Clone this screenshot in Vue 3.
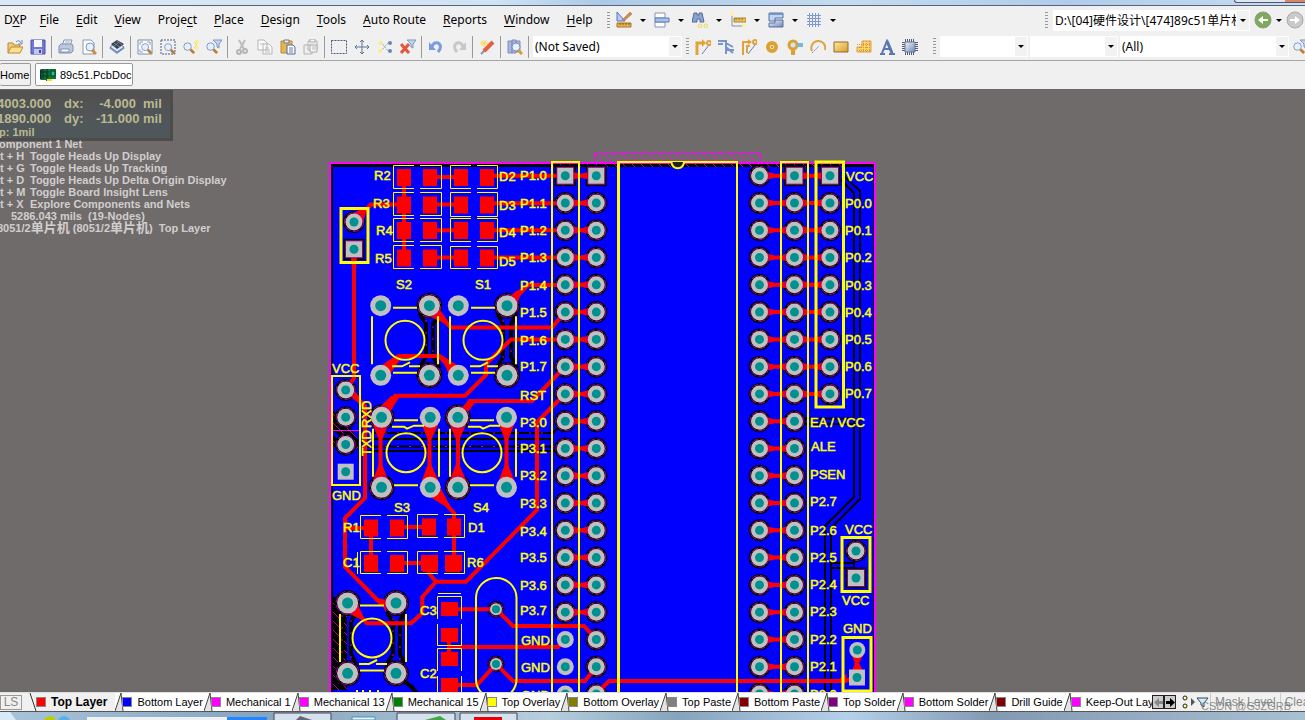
<script setup>
const menus = [
  ['D', 'X', 'P'], ['', 'F', 'ile'], ['', 'E', 'dit'], ['', 'V', 'iew'], ['Proje', 'c', 't'], ['', 'P', 'lace'],
  ['', 'D', 'esign'], ['', 'T', 'ools'], ['', 'A', 'uto Route'], ['', 'R', 'eports'], ['', 'W', 'indow'], ['', 'H', 'elp']
]
const utilities = ['ruler', 'align', 'binoc', 'dimension', 'room', 'grid']
const groups = [
  ['open', 'save'], ['print', 'preview'], ['layers'], ['fit', 'area', 'zoomsel', 'zoomfilter'],
  ['cut', 'copy', 'paste', 'stamp'], ['select', 'move', 'deselect', 'clear'], ['undo', 'redo'], ['wand'], ['browse']
]
const placing = ['route', 'diff', 'multi', 'pad', 'via', 'arc', 'fill', 'poly', 'string', 'chip']

const layers = [
  ['Top Layer', '#ff0000'], ['Bottom Layer', '#0000ff'], ['Mechanical 1', '#ff00ff'], ['Mechanical 13', '#ff00ff'],
  ['Mechanical 15', '#008000'], ['Top Overlay', '#ffff00'], ['Bottom Overlay', '#808000'], ['Top Paste', '#808080'],
  ['Bottom Paste', '#800000'], ['Top Solder', '#800080'], ['Bottom Solder', '#ff00ff'], ['Drill Guide', '#800000'],
  ['Keep-Out Layer', '#ff00ff']
]

const hints = [
  ['t + H', 'Toggle Heads Up Display'], ['t + G', 'Toggle Heads Up Tracking'], ['t + D', 'Toggle Heads Up Delta Origin Display'],
  ['t + M', 'Toggle Board Insight Lens'], ['t + X', 'Explore Components and Nets']
]

const rowY = i => 175.7 + 27.28 * i
const rows = Array.from({ length: 20 }, (_, i) => i)
const pads = []
for (const i of rows) {
  const y = rowY(i)
  pads.push({ x: 565.3, y, r: 8.5, ring: i < 17, sq: i === 0 })
  pads.push({ x: 596.3, y, r: 8.5, ring: true, sq: i === 0 })
  pads.push({ x: 759.5, y, r: 8.5, ring: true })
  pads.push({ x: 794.5, y, r: 8.5, ring: true, sq: i === 0 })
  if (i < 9) pads.push({ x: 830, y, r: 8.5, ring: true, sq: i === 0 })
}
const add = (x, y, r, ring, sq) => pads.push({ x, y, r, ring, sq })
add(354, 222, 8.5, true); add(354, 249.3, 8.5, true, true)
add(345.7, 390, 8.5, true); add(345.7, 417.2, 8.5, true); add(345.7, 444.5, 8.5, true); add(345.7, 471.7, 8, false, true)
add(856, 551, 8.5, true); add(856, 578, 8.5, true, true)
add(857.3, 650, 8, false); add(857, 677.5, 8, false, true)
add(496, 609.3, 6, true); add(496, 664, 6, true)
for (const x of [380.7, 458.3]) for (const y of [305.7, 375.3]) { add(x, y, 10.5, false); add(x + 48.7, y, 10.5, true) }
for (const x of [381.5, 457.8]) for (const y of [417.3, 487.3]) { add(x, y, 10.5, true); add(x + 48.7, y, 10.5, false) }
for (const x of [347.6, 396]) for (const y of [603, 673.3]) add(x, y, 10.5, true)

const link = (x1, x2, y) =>
  `M${x1} ${y - 5}L${x1 + 11} ${y - 3}L${x1 + 15} ${y - 2}H${x2 - 15}L${x2 - 11} ${y - 3}L${x2} ${y - 5}V${y + 5}L${x2 - 11} ${y + 3}L${x2 - 15} ${y + 2}H${x1 + 15}L${x1 + 11} ${y + 3}L${x1} ${y + 5}Z`
const links = []
for (const i of rows) {
  if (i < 17) links.push(link(565.3, 596.3, rowY(i)))
  links.push(link(759.5, 794.5, rowY(i)))
  if (i < 9) links.push(link(794.5, 830, rowY(i)))
}

const traces = [
  'M354 249V378L346 390L365 406V498L345 518V567L380 602.7H396',
  'M345 528H371V563', 'M404 177V257', 'M404 204.5H371L354 222',
  'M430 177H461', 'M430 204.5H461', 'M430 230.3H461', 'M430 257.5H461',
  'M487 175.7H565', 'M487 203.3H565', 'M487 230.3H565', 'M487 257.5H565',
  'M507 306L528 285H565', 'M429 306L451 327.5H552L565 312',
  'M565 339.5H511L486 364V375L465 395.7H395L381 417', 'M381 375L400 356H439L458 375',
  'M565 366.7L532 401H470L458 417', 'M565 394L537 422V510L466 581.7H436L422.3 597V613L411 623.3H367L348 603',
  'M436 581.7L428 572', 'M430 487L454 513V563', 'M397 527H429', 'M397 563H429',
  'M449 609.3H496L513 626H584L596 639', 'M449 634V658', 'M449 647H558L565 639',
  'M449 685H477L496 664L513 681H585L596 667', 'M596 694L609 681H845L857 677', 'M857 650V677',
  'M380.5 417V487', 'M429.5 417V487', 'M458 417V487', 'M506.5 417V487'
]
const flares = [
  'M373 425H388L382 440H379Z', 'M422 425H438L431 440H428Z', 'M450 425H466L459 440H456Z', 'M499 425H514L508 440H505Z',
  'M373 480H388L382 464H379Z', 'M422 480H438L431 464H428Z', 'M450 480H466L459 464H456Z', 'M499 480H514L508 464H505Z',
  'M429 316L438 307L452 327Z', 'M516 307L507 298L518 290L528 287L520 296Z', 'M382 365L390 374L402 357L398 354Z', 'M449 374L457 365L440 354L442 360Z',
  'M390 412L380 407L391 396H400Z', 'M462 407L468 412L476 401H469Z', 'M354 395L362 406H367L352 388Z', 'M348 613L358 605L366 622Z',
  'M430 497L441 489L453 511Z', 'M363 222L353 213L368 206Z', 'M351 257H357L356 270H352Z', 'M386 612L386 600L378 598Z', 'M845 684L839 679L847 674Z', 'M852 656H863L859 663L863 671H852L855 663Z'
]

const smd = [
  [393, 165, 49, 24, 404, 430, 177], [393, 192, 49, 24, 404, 430, 204.5], [393, 218, 49, 24, 404, 430, 230], [393, 245, 49, 24, 404, 430, 257.5],
  [450, 165, 48, 24, 461, 487, 177], [450, 192, 48, 25, 461, 487, 204.5], [450, 218, 48, 24, 461, 487, 230], [450, 246, 48, 23, 461, 487, 257.5],
  [360, 515, 48, 24, 371, 397, 527.5], [417, 514, 48, 24, 429, 454, 526.5], [360, 551, 48, 23, 371, 397, 563], [417, 551, 48, 23, 430, 453, 563]
]
const bracket = ([x, y, w, h]) => `M${x + 21} ${y + .5}H${x + .5}V${y + h - .5}H${x + 21}M${x + 27} ${y + .5}H${x + w - .5}V${y + h - .5}H${x + 27}`
const switches = [[405, 340.3, 372], [483, 340.3, 450], [406, 452.7, 373], [482, 452.7, 450], [372, 638, 340]]

const labels = [
  ['R2', 374, 180], ['R3', 373, 208], ['R4', 376, 235], ['R5', 375, 263],
  ['D2', 499, 181], ['D3', 499, 210], ['D4', 499, 237], ['D5', 499, 266],
  ['S2', 396, 289], ['S1', 475, 289], ['S3', 394, 512], ['S4', 473, 512],
  ['VCC', 332, 373], ['GND', 332, 500], ['R1', 343, 532], ['C1', 343, 567], ['D1', 468, 532], ['R6', 467, 567], ['C3', 420, 615], ['C2', 420, 678],
  ['P1.0', 520, 180], ['P1.1', 520, 208], ['P1.2', 520, 235], ['P1.3', 520, 262], ['P1.4', 520, 290], ['P1.5', 520, 317], ['P1.6', 520, 345], ['P1.7', 520, 371],
  ['RST', 520, 400], ['P3.0', 520, 427], ['P3.1', 520, 453], ['P3.2', 520, 480], ['P3.3', 520, 508], ['P3.4', 520, 536], ['P3.5', 520, 562], ['P3.6', 520, 590], ['P3.7', 520, 615],
  ['GND', 521, 645], ['GND', 521, 672], ['GND', 521, 700],
  ['VCC', 846, 181], ['P0.0', 845, 208], ['P0.1', 845, 235], ['P0.2', 845, 262], ['P0.3', 845, 290], ['P0.4', 845, 317], ['P0.5', 845, 344], ['P0.6', 845, 371], ['P0.7', 845, 398],
  ['EA / VCC', 810, 427], ['ALE', 811, 451], ['PSEN', 810, 479], ['P2.7', 810, 506], ['P2.6', 810, 535], ['P2.5', 810, 562], ['P2.4', 810, 589], ['P2.3', 810, 616], ['P2.2', 810, 644], ['P2.1', 810, 671], ['P2.0', 810, 699],
  ['VCC', 845, 534], ['VCC', 842, 605], ['GND', 843, 633]
]
</script>

<template>
  <div class="app">
    <svg class="sprite" aria-hidden="true">
      <defs>
        <linearGradient id="gold" x1="0" y1="0" x2="1" y2="1"><stop offset="0" stop-color="#ffe9a0" /><stop offset="1" stop-color="#d99a2c" /></linearGradient>
        <linearGradient id="steel" x1="0" y1="0" x2="1" y2="1"><stop offset="0" stop-color="#f0f6ff" /><stop offset="1" stop-color="#6f86b8" /></linearGradient>
        <symbol id="i-lens" viewBox="0 0 16 16"><path d="M10 10l4 4" stroke="#c47a2c" stroke-width="3" /><circle cx="7" cy="7" r="4" fill="#e4f0ff" stroke="#7e96bb" /></symbol>
        <symbol id="i-open" viewBox="0 0 16 16"><path d="M1 14V4h5l1 2h6v3" fill="#f0cb78" stroke="#b98a3b" /><path d="M1 14l3-6h12l-3 6z" fill="#ffe08c" stroke="#b98a3b" /><path d="M9 3q3-3 5 1m1-3v4h-4" fill="none" stroke="#6d87b5" /></symbol>
        <symbol id="i-save" viewBox="0 0 16 16"><path d="M1 1h14v14H1z" fill="#7078d0" stroke="#4a50a8" /><path d="M4 1h8v7H4z" fill="#f4f6ff" /><path d="M4 10h8v5H4z" fill="#bfc5ec" /><path d="M9 11h2v3H9z" fill="#434a9a" /></symbol>
        <symbol id="i-print" viewBox="0 0 16 16"><path d="M4 7l2-6h8l-2 6" fill="#fff" stroke="#8494b2" /><path d="M1 7l2-2h11l1 2v5l-2 2H1z" fill="#bdc8dc" stroke="#8090ac" /><path d="M3 10h8v3H3z" fill="#fff" stroke="#8090ac" /><path d="M7 3h5M6 5h5" stroke="#9aa9c4" /></symbol>
        <symbol id="i-preview" viewBox="0 0 16 16"><path d="M2 1h8l3 3v11H2z" fill="#fff" stroke="#8797b4" /><circle cx="9" cy="8" r="4" fill="#e2f0ff" stroke="#8396b5" /><path d="M11 11l4 4" stroke="#d08b42" stroke-width="3" /></symbol>
        <symbol id="i-layers" viewBox="0 0 16 16"><path d="M0 9l8-5 8 5-8 6z" fill="#7894bf" /><path d="M1 8l7-5 7 5-7 5z" fill="#dce7f5" stroke="#6883ab" /><path d="M2 5l6-4 7 4-7 5z" fill="#39414c" /><path d="M5 4l6 4M8 2l5 4M5 7l5-4" stroke="#7a8491" /></symbol>
        <symbol id="i-fit" viewBox="0 0 16 16"><path d="M1 1h14v14H1z" fill="#fff" stroke="#7b8ca9" /><path d="M3 6V3h3M10 3h3v3M3 10v3h3" fill="none" stroke="#8ba0c8" /><use href="#i-lens" x="2" y="2" width="14" height="14" /></symbol>
        <symbol id="i-area" viewBox="0 0 16 16"><path d="M1 1h14v14H1z" fill="none" stroke="#4f5f85" stroke-dasharray="2 1" /><use href="#i-lens" x="2" y="2" width="14" height="14" /></symbol>
        <symbol id="i-zoomsel" viewBox="0 0 16 16"><use href="#i-lens" x="-2" y="1" width="15" height="15" /><circle cx="14" cy="3" r="2" fill="#ffee80" /><circle cx="14" cy="9" r="2" fill="#ffee80" /><path d="M11 3l3 3-3 3" fill="none" stroke="#e2d68d" /></symbol>
        <symbol id="i-zoomfilter" viewBox="0 0 16 16"><use href="#i-lens" x="-2" y="1" width="15" height="15" /><path d="M7 1h9l-3 4v4l-2-1V5z" fill="#c4d8f3" stroke="#7c96c2" /></symbol>
        <symbol id="i-cut" viewBox="0 0 16 16"><path d="M5 1l5 9M11 1L6 10" stroke="#bcbcbc" stroke-width="2" /><circle cx="5" cy="13" r="2" fill="none" stroke="#b4b4b4" stroke-width="2" /><circle cx="11" cy="12" r="2" fill="none" stroke="#b4b4b4" stroke-width="2" /></symbol>
        <symbol id="i-copy" viewBox="0 0 16 16"><path d="M1 1h6l3 3v7H1zM6 5h6l3 3v7H6z" fill="#fafafa" stroke="#b5b5b5" /><path d="M3 5h4M8 9h4M8 11h5M8 13h5" stroke="#bbb" /></symbol>
        <symbol id="i-paste" viewBox="0 0 16 16"><path d="M1 2h11v12H1z" fill="#e5b64e" stroke="#b88a38" /><path d="M4 1h5v3H4z" fill="#eee" stroke="#777" /><path d="M7 6h6l2 2v7H7z" fill="#f8fbff" stroke="#526ba0" /><path d="M9 9h4M9 11h4M9 13h4" stroke="#6c82b1" /></symbol>
        <symbol id="i-stamp" viewBox="0 0 16 16"><path d="M5 2h9v9H5zM1 6h8v9H1z" fill="#eee" stroke="#b4b4b4" /><path d="M7 0h5v3H7zM7 6h7v7H7z" fill="#f7f7f7" stroke="#aaa" /><path d="M9 8h4M9 10h4" stroke="#bbb" /></symbol>
        <symbol id="i-select" viewBox="0 0 16 16"><path d="M.5 1.5h15v13H.5z" fill="none" stroke="#455b83" stroke-dasharray="2 1" /></symbol>
        <symbol id="i-move" viewBox="0 0 16 16"><path d="M8 1v14M1 8h14M6 3l2-2 2 2M6 13l2 2 2-2M3 6L1 8l2 2M13 6l2 2-2 2" fill="none" stroke="#5f7497" /></symbol>
        <symbol id="i-deselect" viewBox="0 0 16 16"><path d="M4 3l7 9M11 4l-7 8" stroke="#8fa1c2" stroke-dasharray="2 1" /><circle cx="3" cy="4" r="2" fill="#ffee80" /><circle cx="3" cy="12" r="2" fill="#ffee80" /><circle cx="13" cy="4" r="2" fill="#6b84b5" /><circle cx="13" cy="12" r="2" fill="#6b84b5" /></symbol>
        <symbol id="i-clear" viewBox="0 0 16 16"><path d="M1 5l8 9M9 5l-8 9" stroke="#e5543b" stroke-width="3" /><path d="M7 1h9l-3 4v4l-2-1V5z" fill="#c4d8f3" stroke="#7c96c2" /></symbol>
        <symbol id="i-undo" viewBox="0 0 16 16"><path d="M4 8q1-5 6-4 5 3 0 9" fill="none" stroke="#7a9be0" stroke-width="3" /><path d="M1 3v8h7z" fill="#7a9be0" /></symbol>
        <symbol id="i-redo" viewBox="0 0 16 16"><path d="M12 8q-1-5-6-4-5 3 0 9" fill="none" stroke="#c6c8ca" stroke-width="3" /><path d="M15 3v8H8z" fill="#c6c8ca" /></symbol>
        <symbol id="i-wand" viewBox="0 0 16 16"><path d="M2 15l4-4" stroke="#8494aa" stroke-width="2" /><path d="M5 12l9-9" stroke="#e35f42" stroke-width="4" /><path d="M5 1v7M1 4h8M2 2l6 5M8 1L2 7" stroke="#ffd451" /></symbol>
        <symbol id="i-browse" viewBox="0 0 16 16"><path d="M1 2h4v12H1zM5 1h4v13H5zM9 2h4v11H9z" fill="#a8b7de" stroke="#7f8dbb" /><circle cx="9" cy="8" r="4" fill="#e4f3ff" stroke="#8093b3" /><path d="M11 11l4 4" stroke="#d39b43" stroke-width="3" /></symbol>
        <symbol id="i-ruler" viewBox="0 0 16 16"><path d="M1 0v9h8z" fill="#b6c9f2" stroke="#5679be" /><path d="M6 8l8-8 2 2-8 7z" fill="#cf8a4e" stroke="#a96e3b" stroke-width=".5" /><path d="M1 11h14v4H1z" fill="#eab24a" stroke="#a77325" /><path d="M4 11v2M7 11v2M10 11v2M13 11v2" stroke="#85561b" /></symbol>
        <symbol id="i-align" viewBox="0 0 16 16"><path d="M1 1h10v5H1zM1 10h10v5H1z" fill="#fff" stroke="#8495b5" /><path d="M1 6h14v4H1z" fill="#a9c1ee" stroke="#5878b2" /></symbol>
        <symbol id="i-binoc" viewBox="0 0 16 16"><path d="M2 1h3v2h2V1h3l2 9H8V7H5v3H0z" fill="#8ba3cc" stroke="#536b99" /><circle cx="8" cy="14" r="2" fill="#fff39b" stroke="#e2d68d" /><circle cx="14" cy="14" r="2" fill="#fff39b" stroke="#e2d68d" /></symbol>
        <symbol id="i-dimension" viewBox="0 0 16 16"><path d="M2 2v12h13" fill="none" stroke="#7f93b5" /><path d="M4 6h12v4H4z" fill="#e8c353" stroke="#a98432" /><path d="M6 6v2M9 6v2M12 6v2" stroke="#8d702f" /><circle cx="2" cy="2" r="2" fill="#fff39b" /><circle cx="14" cy="14" r="2" fill="#fff39b" /></symbol>
        <symbol id="i-room" viewBox="0 0 16 16"><path d="M1 1h14v5H7v3H1z" fill="#c3d4f5" stroke="#54709f" /><path d="M1 11h6V8h8v7H1z" fill="url(#steel)" stroke="#54709f" /><path d="M1 1h14v2H1z" fill="#7894c5" /></symbol>
        <symbol id="i-grid" viewBox="0 0 16 16"><path d="M3.500 1v14M6.500 1v14M9.500 1v14M12.500 1v14M1 3.500h14M1 6.500h14M1 9.500h14M1 12.500h14" stroke="#7d98d2" /></symbol>
        <symbol id="i-route" viewBox="0 0 16 16"><path d="M2 16V4h7" fill="none" stroke="#e0a33b" stroke-width="3" /><path d="M7 0v8l4-4z" fill="#e0a33b" /><path d="M7 15l7-9" stroke="#5f82bb" /><circle cx="14" cy="4" r="2" fill="none" stroke="#e0a33b" stroke-width="2" /></symbol>
        <symbol id="i-diff" viewBox="0 0 16 16"><path d="M0 2h8v13M0 5h5M8 4l7 4M8 8l7 6M8 11h8" fill="none" stroke="#7994cc" stroke-width="2" /></symbol>
        <symbol id="i-multi" viewBox="0 0 16 16"><path d="M2 16V3h7M6 14V7h3" fill="none" stroke="#e0a33b" stroke-width="2" /><path d="M7 0v6l4-3z" fill="#e0a33b" /><path d="M7 15l7-9" stroke="#5f82bb" /><circle cx="14" cy="3" r="2" fill="none" stroke="#e0a33b" stroke-width="2" /></symbol>
        <symbol id="i-pad" viewBox="0 0 16 16"><circle cx="8" cy="8" r="4" fill="#fff8d0" stroke="#dda032" stroke-width="4" /><circle cx="8" cy="8" r="1" fill="#b77a27" /></symbol>
        <symbol id="i-via" viewBox="0 0 16 16"><path d="M6 9v7" stroke="#dda032" stroke-width="4" /><circle cx="6" cy="6" r="4" fill="#cbe6f6" stroke="#dda032" stroke-width="3" /><path d="M10 4h6v4h-6z" fill="#79b6d8" /></symbol>
        <symbol id="i-arc" viewBox="0 0 16 16"><path d="M2 12a7 7 0 1 1 13-1" fill="none" stroke="#e0a33b" stroke-width="2" /><path d="M2 14l7-7" stroke="#6f8bbb" stroke-dasharray="2 1" /></symbol>
        <symbol id="i-fill" viewBox="0 0 16 16"><path d="M1 3h14v10H1z" fill="url(#gold)" stroke="#936b2b" /></symbol>
        <symbol id="i-poly" viewBox="0 0 16 16"><path d="M6 2h9v11H1V8h5z" fill="#ffd46a" stroke="#dba33d" /><path d="M1 5.500h14M1 8.500h14M1 11.500h14M4.500 8v5M7.500 2v12M10.500 2v12M13.500 2v12" stroke="#d3983b" stroke-dasharray="1 1" /></symbol>
        <symbol id="i-string" viewBox="0 0 16 16"><path d="M1 15h5M10 15h6M3 14L8 2l5 12M5 10h6" fill="none" stroke="#5b76b3" stroke-width="2" /><path d="M8 2l5 12" stroke="#5b76b3" stroke-width="3" /></symbol>
        <symbol id="i-chip" viewBox="0 0 16 16"><path d="M3 1.500h10M3 14.500h10M1.500 3v10M14.500 3v10" fill="none" stroke="#505d75" stroke-width="3" stroke-dasharray="1 1" /><path d="M3 3h10v10H3z" fill="url(#steel)" stroke="#6b7894" /></symbol>
      </defs>
    </svg>

    <div class="titlebar"><span></span></div>

    <header class="bar menubar">
      <nav class="menus">
        <button v-for="m in menus" :key="m.join('')" type="button">{{ m[0] }}<u>{{ m[1] }}</u>{{ m[2] }}</button>
      </nav>
      <i class="grip"></i>
      <button v-for="u in utilities" :key="u" class="drop" type="button" :aria-label="u">
        <svg class="icon"><use :href="'#i-' + u" /></svg><i class="tri"></i>
      </button>
      <div class="address">
        <i class="grip"></i>
        <label class="combo path">
          <select aria-label="Document path"><option>D:\[04]硬件设计\[474]89c51单片机</option></select><span class="arrow"><i class="tri"></i></span>
        </label>
        <button class="nav" type="button" aria-label="Back"><svg width="18" height="18" viewBox="0 0 18 18"><circle cx="9" cy="9" r="8" fill="#7faa5c" stroke="#8b9a85" /><path d="M14 8H9V5L4 9l5 4v-3h5z" fill="#fff" /></svg></button>
        <i class="tri"></i>
        <button class="nav" type="button" aria-label="Forward"><svg width="18" height="18" viewBox="0 0 18 18"><circle cx="9" cy="9" r="8" fill="#c9c9c9" stroke="#aaa" /><path d="M4 8h5V5l5 4-5 4v-3H4z" fill="#fff" /></svg></button>
      </div>
    </header>

    <div class="bar toolbar">
      <div v-for="(g, n) in groups" :key="n" class="group">
        <button v-for="b in g" :key="b" type="button" :aria-label="b"><svg class="icon"><use :href="'#i-' + b" /></svg></button>
      </div>
      <label class="combo saved"><select aria-label="Filter"><option>(Not Saved)</option></select><span class="arrow"><i class="tri"></i></span></label>
      <i class="grip"></i>
      <div class="placing">
        <button v-for="b in placing" :key="b" type="button" :aria-label="b"><svg class="icon"><use :href="'#i-' + b" /></svg></button>
      </div>
      <div class="filters">
        <i class="grip"></i>
        <label class="combo small"><select aria-label="Net"><option></option></select><span class="arrow"><i class="tri"></i></span></label>
        <label class="combo small"><select aria-label="Component"><option></option></select><span class="arrow"><i class="tri"></i></span></label>
        <label class="combo all"><select aria-label="Scope"><option>(All)</option></select><span class="arrow"><i class="tri"></i></span></label>
        <button class="last" type="button" aria-label="Apply filter"><svg class="icon"><use href="#i-zoomfilter" /></svg></button>
      </div>
    </div>

    <div class="docs">
      <button class="home" type="button">Home</button>
      <button class="doc" type="button">
        <svg width="17" height="12" viewBox="0 0 17 12"><path d="M1 0h15v10h-4v2H6v-1H1z" fill="#087444" /><path d="M0 1h1v9H0zM3 0v10M7 0v10M1 3h8M1 7h8" stroke="#12301f" fill="#222" /><path d="M11 2h4v5h-4z" fill="#39b96d" stroke="#003d20" /><path d="M7 11h5" stroke="#ffe000" stroke-width="2" /></svg>
        89c51.PcbDoc
      </button>
    </div>

    <main class="canvas">
      <svg class="board" width="1305" height="602" viewBox="0 90 1305 602" role="img" aria-label="PCB layout">
        <defs>
          <pattern id="hatch" width="9" height="9" patternUnits="userSpaceOnUse"><path d="M0 0l9 9" stroke="#f0f" /></pattern>
          <pattern id="dark" width="9" height="9" patternUnits="userSpaceOnUse"><path d="M0 0h9v9H0z" fill="#000" /><path d="M0 0l9 9" stroke="#b000b0" /></pattern>
        </defs>
        <path d="M595 154H760V162H595Z" fill="url(#hatch)" />
        <path d="M594.500 163V153.500H760.500V163" fill="none" stroke="#f0f" />
        <rect x="330" y="163" width="545" height="560" fill="#000" stroke="#f0f" stroke-width="2" />
        <path d="M333 167H873V700H333Z" fill="#00f" />
        <path d="M553 164H843V167H553Z" fill="url(#dark)" />
        <path d="M332 410L346 420L358 440V449L332 430ZM332 435L350 450L345 456L332 445ZM333 597H347V690H333Z" fill="url(#dark)" />
        <path d="M331 430.500H360" stroke="#f0f" />
        <g fill="none" stroke="#000" stroke-width="2">
          <path d="M373 433H553L565 421M373 439H552M364 446.500H554M364 451H565" />
          <path d="M841 180L854 193V497L825 526V692M844 176L860 191V499L831 528V692M795 418.500H854M795 424H854M831 563H854V578M831 568H852" />
          <path d="M419 313L426 324V357L419 368M440 313L433 324V357L440 368M497 313L503 324V357L497 368M517 313L511 324V357L517 368" stroke-width="4" />
          <path d="M340 612L342 620V656L340 664M356 612L351 622V654L356 664M387 612L393 622V654L387 664M404 612L400 622V654L404 664M402 680L412 687L422 700" stroke-width="4" />
        </g>
        <path d="M385 446.500H554M385 433H552M426 320V360M433 326V360M503 320V360M511 326V360M342 615V661M351 620V661M393 618V661M400 622V661" fill="none" stroke="#c000c0" stroke-dasharray="2 10" />

        <g v-for="(p, i) in pads" :key="'r' + i">
          <template v-if="p.ring">
            <rect v-if="p.sq" :x="p.x - p.r - 2" :y="p.y - p.r - 2" :width="p.r * 2 + 4" :height="p.r * 2 + 4" fill="#000" />
            <circle v-else :cx="p.x" :cy="p.y" :r="p.r + 2.500" fill="#000" />
          </template>
        </g>
        <g fill="none" stroke="#f00" stroke-width="4"><path v-for="t in traces" :key="t" :d="t" /></g>
        <g fill="#f00"><path v-for="t in links" :key="t" :d="t" /><path v-for="t in flares" :key="t" :d="t" /></g>
        <g v-for="(p, i) in pads" :key="'p' + i">
          <template v-if="p.sq">
            <rect :x="p.x - p.r" :y="p.y - p.r" :width="p.r * 2" :height="p.r * 2" fill="#c0c0c0" :stroke="p.ring ? '#800080' : 'none'" />
          </template>
          <template v-else>
            <circle v-if="p.ring" :cx="p.x" :cy="p.y" :r="p.r + 1" fill="none" stroke="#a000a0" stroke-width="1" stroke-dasharray="7 2" />
            <circle :cx="p.x" :cy="p.y" :r="p.r" fill="#c0c0c0" />
          </template>
          <circle :cx="p.x" :cy="p.y" :r="p.r > 10 ? 5.500 : p.r < 7 ? 4 : 4.500" fill="#009090" />
        </g>
        <g fill="#f00">
          <template v-for="(s, i) in smd" :key="i">
            <rect :x="s[4] - 7" :y="s[6] - 8" width="14" height="17" /><rect :x="s[5] - 7" :y="s[6] - 8" width="14" height="17" />
          </template>
          <path d="M441 602h17v14h-17zM441 628h17v14h-17zM441 652h17v14h-17zM441 678h17v14h-17zM421 555h17v16h-17zM445 555h17v16h-17z" />
        </g>
        <g fill="none" stroke="#ff0" stroke-width="2">
          <path v-for="(s, i) in smd" :key="i" :d="bracket(s)" stroke-width="1" />
          <path d="M437.500 619V596.500H461.500V619M437.500 624V645.500H461.500V624M437.500 671V648.500H461.500V671M437.500 676V700M461.500 676V700M438 593.500H461M357.500 552V574" stroke-width="1" />
          <path d="M552 700V162H579V700M781 700V162H808V700M737 700V162H618.500" />
          <path d="M618.500 161V700M816 162H843.500V407H816ZM341 208.500H368V262.500H341ZM842 537.500H870V591.500H842ZM843 637.500H871V691H843Z" stroke-width="3" />
          <path d="M332 376H360V485H332Z" />
          <path d="M671.500 162A6 6 0 0 0 684 162" fill="#222" />
          <rect x="476" y="578" width="40.500" height="121" rx="20" />
          <g v-for="s in switches" :key="s.join('-')">
            <circle :cx="s[0]" :cy="s[1]" r="19.500" />
            <path :d="`M${s[2]} ${s[1] - 24}v48M${s[2] + 66} ${s[1] - 24}v48M${s[0] - 12} ${s[1] - 32.500}h24M${s[0] - 12} ${s[1] + 32.500}h24`" />
            <path :d="s[1] > 400 && s[1] < 500 ? `M${s[0] - 14} ${s[1] - 26}h12l3 2 7-3h10` : `M${s[0] - 13} ${s[1] + 26}h10l8-4M${s[0] + 4} ${s[1] + 26}h11`" />
          </g>
          <path d="M357 692V690M363 692V690M370 692V690M378 692V690" />
        </g>
        <g class="silk">
          <text v-for="(l, i) in labels" :key="i" :x="l[1]" :y="l[2]">{{ l[0] }}</text>
          <text transform="translate(371 456) rotate(-90)">TXD</text>
          <text transform="translate(371 428) rotate(-90)">RXD</text>
        </g>
      </svg>

      <section class="hud">
        <div class="coords">
          <p><b>4003.000</b><b>dx:</b><b class="num">-4.000</b><b>mil</b></p>
          <p><b>1890.000</b><b>dy:</b><b class="num">-11.000</b><b>mil</b></p>
          <p class="snap">p: 1mil</p>
        </div>
        <p class="net">omponent 1 Net</p>
        <p v-for="h in hints" :key="h[0]"><span class="key">{{ h[0] }}</span>{{ h[1] }}</p>
        <p class="mils">5286.043 mils&nbsp; (19-Nodes)</p>
        <p class="part">8051/2<span>单片机</span> (8051/2<span>单片机</span>)&nbsp; Top Layer</p>
      </section>
    </main>

    <footer class="layerbar">
      <button class="ls" type="button">LS</button>
      <div class="tabs">
        <button v-for="(l, i) in layers" :key="l[0]" type="button" class="layer" :class="{ active: i === 0 }">
          <svg class="slant" width="9" height="19" viewBox="0 0 9 19">
            <path v-if="i === 0" d="M1 0L7 18" fill="none" stroke="#333" />
            <path v-else d="M0 18L6 0L8 18" fill="#e4e4e4" stroke="#444" />
          </svg>
          <i class="swatch" :style="{ background: l[1] }"></i>{{ l[0] }}
        </button>
      </div>
      <div class="scrollers">
        <button type="button" aria-label="Previous layers"><svg width="9" height="9" viewBox="0 0 9 9"><path d="M5 0v3h4v3H5v3L0 4.500z" fill="#888" /></svg></button>
        <button type="button" aria-label="Next layers"><svg width="9" height="9" viewBox="0 0 9 9"><path d="M4 0v3H0v3h4v3l5-4.500z" fill="#000" /></svg></button>
      </div>
      <div class="mask">
        <svg width="28" height="16" viewBox="0 0 28 16"><circle cx="3" cy="4" r="2" fill="#ff8" stroke="#222" /><circle cx="3" cy="12" r="2" fill="#ff8" stroke="#222" /><path d="M9 4l4 4-4 4z" fill="#555" /><path d="M15 4h11l-4 5v4l-3-2V9z" fill="#ccefff" stroke="#345" /></svg>
        <button type="button">Mask Level</button><button type="button">Clear</button>
      </div>
      <span class="watermark">CSDN @GJZGRB</span>
    </footer>

    <div class="taskbar">
      <svg width="520" height="8" viewBox="0 0 520 8">
        <path d="M0 0H10L16 8H0Z" fill="#d9e9f5" /><circle cx="50" cy="10" r="6" fill="#b8d000" /><circle cx="64" cy="10" r="6" fill="#58b0e8" />
        <path d="M87 5H228V8H87Z" fill="#eef2f5" /><path d="M227 5H267V8H227Z" fill="#2287ff" />
        <path d="M274 8V1H331V8M397 8V1H455V8M460 8V1H517V8" fill="#d5e2ee" stroke="#445" />
        <path d="M300 4L312 8H296Z" fill="#667" /><path d="M352 5H375V8H352Z" fill="#e8f7ff" stroke="#4a8fb2" /><path d="M425 8L440 4L446 8Z" fill="#43a844" /><path d="M474 5H502V8H474Z" fill="#e80008" />
      </svg>
    </div>
  </div>
</template>

<style>
html, body { margin: 0; overflow: hidden; }
</style>

<style scoped>
.app { display: flex; flex-direction: column; height: 100vh; overflow: hidden; background: #f0f0f0; color: #000; font: 12px "Noto Sans", "Noto Sans CJK SC", sans-serif; }
.sprite { position: absolute; width: 0; height: 0; }
button { margin: 0; padding: 0; border: 0; background: none; color: inherit; font: inherit; white-space: nowrap; }
p { margin: 0; }
.titlebar { flex: none; box-sizing: border-box; height: 6px; border-bottom: 1px solid #55647a; background: linear-gradient(90deg, #dbe8f3 0, #d0e3f3 38%, #acc9e6 46%, #c5dbef 65%, #b0cce9 82%, #c8def0 100%); }
.titlebar span { display: block; width: 70px; height: 2px; margin-left: auto; border: solid #556; border-width: 0 0 1px 1px; border-radius: 0 0 0 3px; background: linear-gradient(90deg, #dde8f2 0 50px, #d98468 50px); }
.bar { flex: none; display: flex; align-items: center; height: 27px; }
.menubar { padding-top: 1px; height: 26px; }
.menus { display: flex; gap: 1px; width: 605px; flex: none; }
.menus button { padding: 0 8px; line-height: 20px; }
.menus button:first-child { padding: 0 4px; }
.menus u { text-underline-offset: 2px; }
.grip { flex: none; width: 3px; height: 17px; margin: 0 2px; background: repeating-linear-gradient(#999 0 1px, transparent 1px 3px); }
.icon { width: 16px; height: 16px; display: block; }
.tri { flex: none; width: 0; height: 0; border: 3px solid transparent; border-top-color: #000; border-bottom: 0; }
.drop { display: flex; align-items: center; width: 38px; gap: 8px; padding-left: 4px; }
.address { display: flex; align-items: center; margin-left: auto; gap: 3px; }
.combo { position: relative; display: flex; height: 21px; background: #fff; }
.combo select { appearance: none; width: 100%; border: 0; border-radius: 0; margin: 0; padding: 0 14px 0 2px; background: #fff; color: #000; font: inherit; }
.arrow { position: absolute; right: 1px; top: 1px; bottom: 1px; width: 12px; display: flex; align-items: center; justify-content: center; background: #f2f2f2; pointer-events: none; }
.path { width: 197px; }
.nav { width: 20px; height: 20px; display: flex; align-items: center; justify-content: center; }
.toolbar { height: 28px; box-sizing: border-box; padding-left: 3px; border-bottom: 1px solid #a5a5a5; }
.group { display: flex; flex: none; padding-right: 2px; margin-right: 2px; border-right: 1px solid #999; }
.group button, .placing button { width: 23px; height: 22px; display: flex; align-items: center; justify-content: center; }
.placing { display: flex; }
.saved { width: 149px; margin: 0 2px; }
.filters { display: flex; align-items: center; gap: 2px; margin-left: auto; }
.small { width: 88px; }
.all { width: 169px; }
.last { width: 12px; margin-left: 2px; overflow: hidden; }
.docs { flex: none; display: flex; align-items: flex-start; gap: 4px; box-sizing: border-box; height: 29px; padding-top: 2px; border-bottom: 1px solid #666; font: 11px "Liberation Sans", sans-serif; }
.docs button { box-sizing: border-box; height: 23px; border: 1px solid #999; border-radius: 2px; }
.docs .home { width: 31px; border-left: 0; text-align: left; }
.doc { display: flex; align-items: center; gap: 3px; width: 98px; padding-left: 4px; background: #fff; }
.doc svg { flex: none; }
.canvas { position: relative; flex: 1; min-height: 0; overflow: hidden; background: #706b6b; }
.board { position: absolute; left: 0; top: 0; }
.silk { fill: #ff0; stroke: #ff0; stroke-width: .5; font: 13px "Liberation Sans", sans-serif; }
.hud { position: relative; width: 330px; color: #d0cece; font: bold 11px/12px "Liberation Sans", "Noto Sans CJK SC", sans-serif; white-space: nowrap; }
.coords { box-sizing: border-box; width: 173px; height: 51px; margin-bottom: -3px; padding-top: 6px; background: linear-gradient(#514f4f, #50575a 70%); border: solid #4d4c4b; border-width: 0 3px 3px 0; color: #bab992; font-size: 13px; line-height: 15px; }
.coords p { display: grid; grid-template-columns: 64px 32px 40px 30px; }
.coords b:first-child { margin-left: -3px; }
.coords .num { text-align: right; }
.coords b:last-child { padding-left: 7px; }
.coords .snap { display: block; margin-left: -1px; font-size: 11px; line-height: 12px; }
.net { margin-left: -1px; }
.key { display: inline-block; width: 30px; }
.mils { padding-left: 11px; }
.part { margin-left: -3px; }
.part span { font-size: 13px; }
.layerbar { position: relative; flex: none; display: flex; border-bottom: 1px solid #555; border-top: 1px solid #ddd; box-sizing: border-box; height: 20px; overflow: hidden; font: 11px/18px "Liberation Sans", sans-serif; }
.ls { box-sizing: border-box; flex: none; width: 22px; height: 15px; margin: 2px 7px 0 0; border: 1px solid #999; color: #888; font-size: 12px; line-height: 13px; }
.tabs { display: flex; flex: 1; min-width: 0; overflow: hidden; }
.layer { display: flex; flex: none; align-items: center; gap: 5px; height: 18px; padding-right: 1px; background: #fff; }
.active { background: #f0f0f0; font-weight: bold; font-size: 12px; padding-right: 8px; }
.slant { flex: none; margin-right: -7px; }
.swatch { box-sizing: border-box; width: 10px; height: 10px; border: 1px solid #888; }
.scrollers { display: flex; flex: none; align-items: center; }
.scrollers button { box-sizing: border-box; width: 12px; height: 14px; display: flex; align-items: center; justify-content: center; border: 1px solid #222; background: #ccc; }
.mask { box-sizing: border-box; display: flex; flex: none; align-items: center; width: 129px; padding-left: 6px; overflow: hidden; color: #888; font-size: 12px; }
.mask svg { flex: none; }
.mask button { padding: 0 4px; border-left: 1px solid #ccc; }
.watermark { position: absolute; right: 14px; top: 4px; color: #777; font-size: 11px; opacity: .8; }
.taskbar { flex: none; height: 8px; overflow: hidden; background: linear-gradient(90deg, #a8c4db, #86a4bd 20%, #b6cede 42%, #87a4bd 52%, #b5d0eb 65%, #8299b2 76%, #a9bfd2); }
.taskbar svg { display: block; }
</style>
